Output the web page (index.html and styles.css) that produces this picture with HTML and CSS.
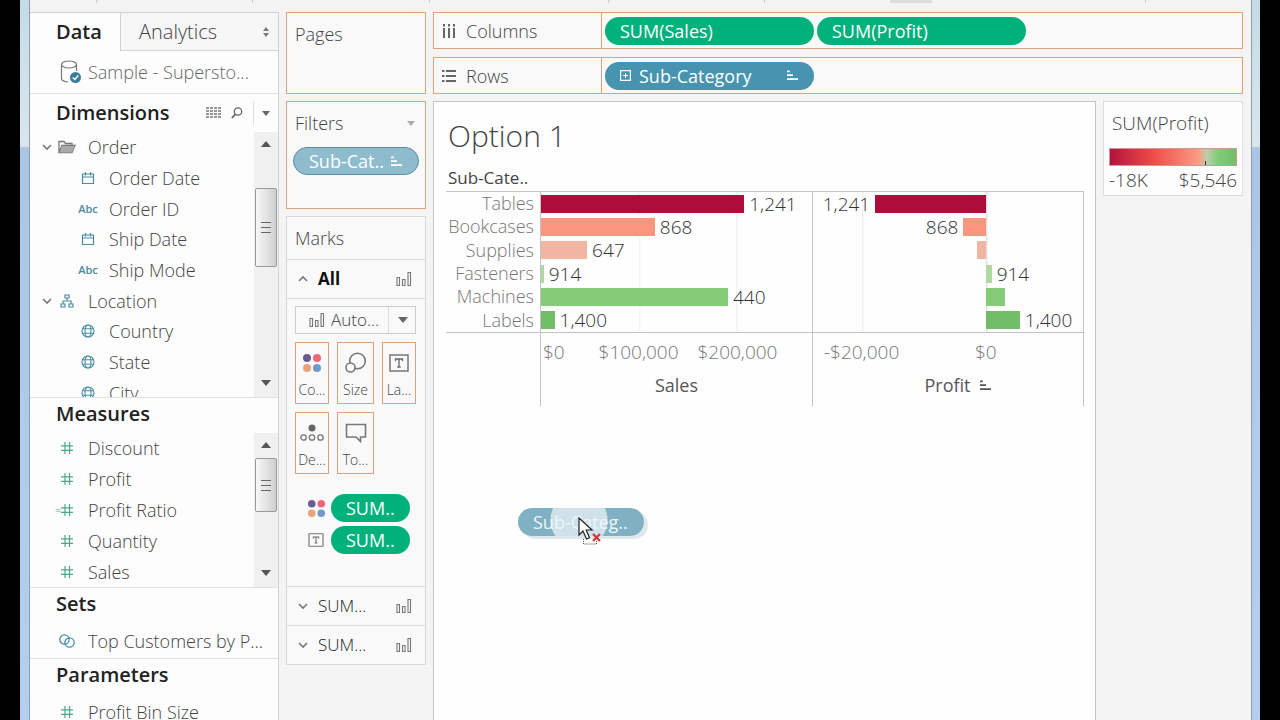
FILE: index.html
```
<!DOCTYPE html>
<html lang="en">
<head>
    <meta charset="utf-8">
    <title>Superstore - Option 1</title>
    <link rel="stylesheet" href="styles.css">
</head>
<body>
    <!-- shared icons -->
    <svg class="sprite" aria-hidden="true">
        <symbol id="i-chevron" viewBox="0 0 12 12"><path d="M2 4l4 4 4-4" fill="none" stroke="#777" stroke-width="1.6"/></symbol>
        <symbol id="i-calendar" viewBox="0 0 14 14"><path d="M1.5 3h11v9.5h-11zM1.5 6h11M4.5 1v3.500M9.500 1v3.500" fill="none" stroke="#4d8a9c" stroke-width="1.2"/></symbol>
        <symbol id="i-globe" viewBox="0 0 14 14"><g fill="none" stroke="#4a8fa6" stroke-width="1.1"><circle cx="7" cy="7" r="6"/><ellipse cx="7" cy="7" rx="3" ry="6"/><path d="M1.500 4.800h11M1.500 9.200h11"/></g></symbol>
        <symbol id="i-hash" viewBox="0 0 14 14"><path d="M5 1v12M9.500 1v12M1 4.800h12M1 9.300h12" stroke="#4fa58a" stroke-width="1.200"/></symbol>
        <symbol id="i-bars" viewBox="0 0 16 16"><path d="M1 6.500h2.500v8H1zM6.500 8.500H9v6H6.500zM12 1.500h2.500v13H12z" fill="none" stroke="#777" stroke-width="1.100"/></symbol>
        <symbol id="i-sort" viewBox="0 0 14 12"><path d="M1 1.500h3M1 5.500h6.500M1 10h12" stroke="currentColor" stroke-width="2"/></symbol>
        <symbol id="i-dots" viewBox="0 0 20 20"><circle cx="5" cy="5" r="4" fill="#6b5b95"/><circle cx="15" cy="5" r="4" fill="#ee6677"/><circle cx="5" cy="15" r="4" fill="#eba27c"/><circle cx="15" cy="15" r="4" fill="#6f9bc8"/></symbol>
        <symbol id="i-text" viewBox="0 0 20 18"><path d="M1 1h18v16H1z" fill="none" stroke="#777" stroke-width="1.500"/><path d="M6.500 7V5h7v2M10 5v8M8.300 13h3.400" fill="none" stroke="#666" stroke-width="1.300"/></symbol>
    </svg>

    <div class="window">
        <div class="toolbar"><i></i><i></i><i></i><i></i><i></i><i class="hot"></i><i></i></div>
        <div class="workspace">

            <aside class="data-pane">
                <div class="tabs">
                    <button class="tab active">Data</button>
                    <button class="tab">Analytics
                        <svg width="6" height="10" viewBox="0 0 6 10"><path d="M0 4l3-4 3 4zM0 6l3 4 3-4z" fill="#777"/></svg>
                    </button>
                </div>
                <div class="source">
                    <svg width="22" height="24" viewBox="0 0 22 24"><g fill="none" stroke="#777" stroke-width="1.200"><ellipse cx="9" cy="4.500" rx="7.500" ry="3.500"/><path d="M1.500 4.500v14c0 1.500 2.500 3 6.500 3.500M16.500 4.500V11"/></g><circle cx="15.500" cy="17.500" r="5.500" fill="#3b7d99"/><path d="M12.800 17.500l2 2 3.500-4" fill="none" stroke="#fff" stroke-width="1.400"/></svg>
                    <span>Sample - Supersto...</span>
                </div>
                <div class="pane-head">
                    <h2>Dimensions</h2>
                    <button class="icon-btn" aria-label="View data"><svg width="15" height="12" viewBox="0 0 15 12"><path d="M0 1h15M0 4h15M0 7h15M0 10h15" stroke="#777" stroke-width="1.300" stroke-dasharray="3 1"/></svg></button>
                    <button class="icon-btn" aria-label="Find field"><svg width="12" height="12" viewBox="0 0 12 12"><circle cx="7" cy="4.500" r="3.700" fill="none" stroke="#666" stroke-width="1.300"/><path d="M4.300 7.300L.8 11" stroke="#666" stroke-width="1.800"/></svg></button>
                    <button class="icon-btn menu" aria-label="Menu"><svg width="8" height="5" viewBox="0 0 8 5"><path d="M0 0h8L4 5z" fill="#666"/></svg></button>
                </div>
                <div class="scroll-area dimensions">
                    <ul class="fields">
                        <li class="folder"><svg class="chev"><use href="#i-chevron"/></svg><svg width="18" height="14" viewBox="0 0 18 14"><path d="M1 12.500v-11h5l1.500 2H14v2M1 12.500l3-7h13l-3 7z" fill="none" stroke="#777" stroke-width="1.300"/><path d="M4 6h12.500L14 12.500H1.500z" fill="#aaa"/></svg><span>Order</span></li>
                        <li class="child"><svg width="14" height="14"><use href="#i-calendar"/></svg><span>Order Date</span></li>
                        <li class="child"><b class="abc">Abc</b><span>Order ID</span></li>
                        <li class="child"><svg width="14" height="14"><use href="#i-calendar"/></svg><span>Ship Date</span></li>
                        <li class="child"><b class="abc">Abc</b><span>Ship Mode</span></li>
                        <li class="folder"><svg class="chev"><use href="#i-chevron"/></svg><svg width="14" height="14" viewBox="0 0 14 14"><path d="M5 1h4v3H5zM7 4v3M3 10V7h8v3M1 10h4v3H1zM9 10h4v3H9z" fill="none" stroke="#4d8a9c" stroke-width="1.200"/></svg><span>Location</span></li>
                        <li class="child"><svg width="14" height="14"><use href="#i-globe"/></svg><span>Country</span></li>
                        <li class="child"><svg width="14" height="14"><use href="#i-globe"/></svg><span>State</span></li>
                        <li class="child"><svg width="14" height="14"><use href="#i-globe"/></svg><span>City</span></li>
                    </ul>
                    <div class="scrollbar"><i class="up"></i><i class="thumb"></i><i class="down"></i></div>
                </div>
                <div class="pane-head short"><h2>Measures</h2></div>
                <div class="scroll-area measures">
                    <ul class="fields">
                        <li><svg width="14" height="14"><use href="#i-hash"/></svg><span>Discount</span></li>
                        <li><svg width="14" height="14"><use href="#i-hash"/></svg><span>Profit</span></li>
                        <li class="calc"><svg width="14" height="14"><use href="#i-hash"/></svg><span>Profit Ratio</span></li>
                        <li><svg width="14" height="14"><use href="#i-hash"/></svg><span>Quantity</span></li>
                        <li><svg width="14" height="14"><use href="#i-hash"/></svg><span>Sales</span></li>
                    </ul>
                    <div class="scrollbar"><i class="up"></i><i class="thumb"></i><i class="down"></i></div>
                </div>
                <div class="pane-head short"><h2>Sets</h2></div>
                <ul class="fields single">
                    <li><svg width="16" height="14" viewBox="0 0 16 14"><g fill="none" stroke="#4a8fa6" stroke-width="1.300"><circle cx="5.500" cy="5.500" r="4.700"/><circle cx="10.500" cy="8.500" r="4.700"/></g></svg><span>Top Customers by P...</span></li>
                </ul>
                <div class="pane-head short"><h2>Parameters</h2></div>
                <ul class="fields single">
                    <li><svg width="14" height="14"><use href="#i-hash"/></svg><span>Profit Bin Size</span></li>
                </ul>
            </aside>

            <div class="cards">
                <section class="card pages"><h3>Pages</h3></section>
                <section class="card filters">
                    <h3>Filters <svg width="8" height="5" viewBox="0 0 8 5"><path d="M0 0h8L4 5z" fill="#aaa"/></svg></h3>
                    <button class="pill faded">Sub-Cat..<svg width="13" height="11"><use href="#i-sort"/></svg></button>
                </section>
                <section class="card marks">
                    <h3>Marks</h3>
                    <button class="mark-row open"><svg class="chev"><use href="#i-chevron"/></svg><span>All</span><svg width="16" height="16"><use href="#i-bars"/></svg></button>
                    <div class="mark-body">
                        <div class="mark-type">
                            <svg width="16" height="16"><use href="#i-bars"/></svg>
                            <select aria-label="Mark type"><option>Auto...</option></select>
                            <svg class="arrow" width="10" height="6" viewBox="0 0 10 6"><path d="M0 0h10L5 6z" fill="#666"/></svg>
                        </div>
                        <div class="mark-buttons">
                            <button><svg width="20" height="20"><use href="#i-dots"/></svg>Co...</button>
                            <button><svg width="22" height="22" viewBox="0 0 22 22"><g fill="#fafafa" stroke="#777" stroke-width="1.600"><circle cx="12.500" cy="9" r="7.800"/><circle cx="5.500" cy="15.500" r="4.500"/></g></svg>Size</button>
                            <button><svg width="20" height="18"><use href="#i-text"/></svg>La...</button>
                            <button><svg width="24" height="18" viewBox="0 0 24 18"><circle cx="12" cy="4" r="3.500" fill="#666"/><g fill="none" stroke="#777" stroke-width="1.300"><circle cx="3.500" cy="13.500" r="2.700"/><circle cx="12" cy="13.500" r="2.700"/><circle cx="20.500" cy="13.500" r="2.700"/></g></svg>De...</button>
                            <button><svg width="22" height="20" viewBox="0 0 22 20"><path d="M1.500 1.500h19v12.500h-5v4.500L11 14H1.500z" fill="none" stroke="#777" stroke-width="1.600"/></svg>To...</button>
                        </div>
                        <div class="encodings">
                            <div><svg width="19" height="19"><use href="#i-dots"/></svg><button class="pill green">SUM..</button></div>
                            <div><svg width="16" height="14"><use href="#i-text"/></svg><button class="pill green">SUM..</button></div>
                        </div>
                    </div>
                    <button class="mark-row"><svg class="chev"><use href="#i-chevron"/></svg><span>SUM...</span><svg width="16" height="16"><use href="#i-bars"/></svg></button>
                    <button class="mark-row"><svg class="chev"><use href="#i-chevron"/></svg><span>SUM...</span><svg width="16" height="16"><use href="#i-bars"/></svg></button>
                </section>
            </div>

            <main class="sheet">
                <div class="shelves">
                    <div class="shelf">
                        <h3><svg width="14" height="14" viewBox="0 0 14 14"><path d="M2 0v2.500M7 0v2.500M12 0v2.500M2 4v10M7 4v10M12 4v10" stroke="#666" stroke-width="2"/></svg>Columns</h3>
                        <button class="pill green">SUM(Sales)</button>
                        <button class="pill green">SUM(Profit)</button>
                    </div>
                    <div class="shelf">
                        <h3><svg width="14" height="14" viewBox="0 0 14 14"><path d="M0 2h2.500M0 7h2.500M0 12h2.500M4 2h10M4 7h10M4 12h10" stroke="#666" stroke-width="2"/></svg>Rows</h3>
                        <button class="pill blue"><svg width="11" height="11" viewBox="0 0 11 11"><path d="M.6.6h9.800v9.800H.6zM5.500 3v5M3 5.500h5" fill="none" stroke="#fff" stroke-width="1.200"/></svg>Sub-Category<svg class="sort" width="13" height="11"><use href="#i-sort"/></svg></button>
                    </div>
                </div>
                <div class="canvas">
                    <section class="view">
                        <h1>Option 1</h1>
                        <div class="field-label">Sub-Cate..</div>
                        <div class="chart">
                            <ul class="names">
                                <li>Tables</li><li>Bookcases</li><li>Supplies</li><li>Fasteners</li><li>Machines</li><li>Labels</li>
                            </ul>
                            <ul class="plot sales">
                                <li><i class="c1" style="width:75%"></i>1,241</li>
                                <li><i class="c2" style="width:42%"></i>868</li>
                                <li><i class="c3" style="width:17%"></i>647</li>
                                <li><i class="c4" style="width:1%"></i>914</li>
                                <li><i class="c5" style="width:69%"></i>440</li>
                                <li><i class="c6" style="width:5%"></i>1,400</li>
                            </ul>
                            <ul class="plot profit">
                                <li class="neg">1,241<i class="c1" style="width:64%"></i></li>
                                <li class="neg">868<i class="c2" style="width:13%"></i></li>
                                <li class="neg"><i class="c3" style="width:5%"></i></li>
                                <li class="pos"><i class="c4" style="width:6%"></i>914</li>
                                <li class="pos"><i class="c5" style="width:20%"></i></li>
                                <li class="pos"><i class="c6" style="width:35%"></i>1,400</li>
                            </ul>
                            <div class="corner"></div>
                            <div class="axis sales-axis">
                                <div class="ticks"><span>$0</span><span>$100,000</span><span>$200,000</span></div>
                                <div class="axis-title">Sales</div>
                            </div>
                            <div class="axis profit-axis">
                                <div class="ticks"><span>-$20,000</span><span>$0</span></div>
                                <div class="axis-title">Profit <svg width="13" height="11"><use href="#i-sort"/></svg></div>
                            </div>
                        </div>
                        <div class="drag">
                            Sub-Categ..
                            <svg class="cursor" width="26" height="30" viewBox="0 0 26 30"><path d="M1 1v17l4-4 3.500 8 3-1.300L8.200 13H14z" fill="#fff" stroke="#222" stroke-width="1.200"/><path d="M5.500 22v5h13v-3" fill="none" stroke="#444" stroke-dasharray="1 1"/><path d="M15 17l7 7M22 17l-7 7" stroke="#d0353a" stroke-width="2.200"/></svg>
                        </div>
                    </section>
                    <aside class="legend">
                        <h3>SUM(Profit)</h3>
                        <div class="ramp"></div>
                        <div class="range"><span>-18K</span><span>$5,546</span></div>
                    </aside>
                </div>
            </main>
        </div>
    </div>
</body>
</html>
```
FILE: styles.css
```
* {
    box-sizing: border-box;
}

body {
    margin: 0;
    background: #000;
    color: #444;
    font: 300 18px/24px "Open Sans", sans-serif;
    height: 100vh;
    overflow: hidden;
}

h1, h2, h3, ul {
    margin: 0;
    padding: 0;
    font-weight: 300;
    list-style: none;
}

h3 {
    font-size: 18px;
}

button, select {
    font: inherit;
    color: inherit;
    border: 0;
    margin: 0;
    padding: 0;
    background: none;
    text-align: left;
    white-space: nowrap;
}

svg {
    flex: none;
    display: block;
}

.sprite {
    position: absolute;
    width: 0;
    height: 0;
}

/* window frame */
.window {
    height: 100vh;
    margin: 0 20px;
    padding: 0 8px 0 9px;
    background: linear-gradient(#c3dce8 0, #d9e6ee 146px, #a9c6e8 148px, #b4cff0 100%);
    display: flex;
    flex-direction: column;
}

.toolbar {
    height: 12px;
    flex: none;
    background: #f3f3f4;
    border: solid #8fa0a0;
    border-width: 0 1px;
    display: grid;
    grid-template-columns: 156fr 177fr 179fr 156fr 126fr 255fr 106fr;
    padding-left: 66px;
}

.toolbar i {
    width: 1px;
    height: 3px;
    background: #ccc;
}

.toolbar .hot {
    width: 42px;
    background: #dedee0;
}

.workspace {
    flex: 1;
    min-height: 0;
    display: flex;
    gap: 7px;
    padding-right: 8px;
    background: #f4f4f5;
    border: solid #8fa0a0;
    border-width: 0 1px;
}

/* data pane */
.data-pane {
    width: 249px;
    flex: none;
    background: #fdfdfd;
    border: solid #d2d2d4;
    border-width: 1px 1px 0 0;
    overflow: hidden;
}

.tabs {
    display: flex;
    height: 38px;
}

.tab {
    flex: 1;
    display: flex;
    align-items: center;
    justify-content: space-between;
    padding: 0 9px 0 18px;
    font-size: 20px;
    background: #f7f6f7;
    border: solid #d2d2d4;
    border-width: 0 0 1px 1px;
}

.tab.active {
    flex: none;
    width: 90px;
    padding: 0 0 0 26px;
    color: #222;
    font-weight: 600;
    background: none;
    border: 0;
}

.source {
    display: flex;
    align-items: center;
    gap: 6px;
    height: 43px;
    padding-left: 30px;
    color: #666;
    border-bottom: 1px solid #e2e2e4;
}

.pane-head {
    display: flex;
    align-items: center;
    gap: 10px;
    height: 38px;
    padding-left: 26px;
}

.pane-head h2 {
    flex: 1;
    font-size: 20px;
    font-weight: 600;
    color: #222;
}

.pane-head.short {
    height: 36px;
    padding-bottom: 4px;
    border-top: 1px solid #e2e2e4;
}

.pane-head .menu {
    width: 25px;
    height: 24px;
    display: grid;
    place-items: center;
    border-left: 1px solid #ddd;
}

.scroll-area {
    display: flex;
    overflow: hidden;
}

.dimensions {
    height: 265px;
}

.measures {
    height: 154px;
}

.fields {
    flex: 1;
    display: flex;
    flex-direction: column;
}

.dimensions .fields {
    height: 276px;
}

.fields li {
    flex: 1;
    display: grid;
    grid-template-columns: 20px 1fr;
    gap: 11px;
    align-items: center;
    justify-items: start;
    padding-left: 27px;
    white-space: nowrap;
}

.fields li > svg:nth-last-child(2), .abc {
    justify-self: center;
}

.fields .folder {
    grid-template-columns: 12px 20px 1fr;
    gap: 4px;
    padding-left: 11px;
}

.folder span {
    padding-left: 7px;
}

.fields .child {
    padding-left: 48px;
}

.chev {
    width: 12px;
    height: 12px;
}

.abc {
    font-size: 11px;
    font-weight: 600;
    color: #4d8a9c;
}

.calc {
    position: relative;
}

.calc::before {
    content: "=";
    position: absolute;
    left: 25px;
    color: #4fa58a;
    font-size: 11px;
}

.single li {
    flex: none;
    height: 35px;
}

.scrollbar {
    width: 24px;
    display: flex;
    flex-direction: column;
    align-items: center;
    background: #f0f0f1;
}

.scrollbar .up, .scrollbar .down {
    border: solid transparent;
    border-width: 0 5px 6px;
    border-bottom-color: #555;
    margin: 9px 0 10px;
}

.scrollbar .down {
    border-width: 6px 5px 0;
    border-top-color: #555;
    margin: auto 0 11px;
}

.scrollbar .thumb {
    width: 22px;
    height: 54px;
    border: 1px solid #999;
    border-radius: 2px;
    background:
        repeating-linear-gradient(#666 0 1px, transparent 1px 5px) center / 10px 11px no-repeat,
        linear-gradient(90deg, #f8f8f8, #cfcfd1);
}

.dimensions .thumb {
    height: 79px;
    margin-top: 31px;
}

/* shelves and cards */
.cards {
    width: 140px;
    flex: none;
}

.card {
    border: 1px solid #dba27c;
    background: #f9f9fa;
    margin-bottom: 7px;
}

.card h3 {
    display: flex;
    align-items: center;
    justify-content: space-between;
    height: 42px;
    padding: 0 10px 0 8px;
}

.pages {
    height: 82px;
}

.filters {
    height: 108px;
    padding: 0 6px;
}

.filters h3 {
    padding: 0 4px 0 2px;
}

.pill {
    display: flex;
    align-items: center;
    height: 28px;
    padding: 0 15px;
    border-radius: 14px;
    color: #fff;
    font-weight: 500;
}

.green {
    background: #00b17c;
}

.blue {
    background: #4694b0;
    gap: 8px;
}

.blue .sort {
    margin-left: auto;
}

.faded {
    width: 100%;
    background: #8ebccd;
    border: 1px solid #5b8fa3;
    justify-content: space-between;
    margin-top: 3px;
}

.marks {
    border-color: #d8d8da;
}

.mark-row {
    display: flex;
    align-items: center;
    gap: 9px;
    width: 100%;
    height: 39px;
    padding: 0 13px 0 10px;
    border-top: 1px solid #dcdcde;
    color: #222;
    font-size: 17px;
}

.mark-row span {
    flex: 1;
}

.open span {
    font-weight: 700;
    color: #111;
}

.open .chev {
    transform: rotate(180deg);
}

.mark-body {
    height: 288px;
    border-top: 1px solid #dcdcde;
    padding: 7px 9px 0 8px;
}

.mark-type {
    display: flex;
    align-items: center;
    height: 28px;
    padding-left: 13px;
    gap: 6px;
    border: 1px solid #ccc;
    position: relative;
    font-size: 17px;
}

.mark-type select {
    appearance: none;
    flex: 1;
    height: 26px;
    min-width: 0;
}

.mark-type .arrow {
    position: absolute;
    right: 7px;
    top: 10px;
    pointer-events: none;
}

.mark-type::after {
    content: "";
    position: absolute;
    right: 26px;
    top: 0;
    height: 26px;
    border-left: 1px solid #ddd;
}

.mark-buttons {
    display: grid;
    grid-template-columns: 34px 37px 34px;
    justify-content: space-between;
    gap: 8px 0;
    margin-top: 8px;
}

.mark-buttons button {
    display: grid;
    grid-template-rows: 39px 16px;
    place-items: center;
    height: 62px;
    border: 1px solid #dba27c;
    font-size: 14px;
    line-height: 16px;
}

.encodings {
    display: grid;
    gap: 4px;
    padding: 20px 6px 0 12px;
}

.encodings div {
    display: grid;
    grid-template-columns: 18px 79px;
    gap: 6px;
    align-items: center;
    justify-items: center;
}

.encodings .pill {
    width: 79px;
}

.sheet {
    flex: 1;
    min-width: 0;
    display: flex;
    flex-direction: column;
    gap: 7px;
}

.shelves {
    display: grid;
    gap: 8px;
}

.shelf {
    display: flex;
    align-items: center;
    gap: 3px;
    height: 37px;
    border: 1px solid #dba27c;
    background: #f9f9fa;
}

.shelf h3 {
    display: flex;
    align-items: center;
    gap: 10px;
    width: 168px;
    height: 100%;
    padding-left: 8px;
    border-right: 1px solid #dba27c;
}

.shelf .pill {
    width: 209px;
}

.canvas {
    flex: 1;
    display: flex;
    align-items: flex-start;
    gap: 7px;
}

.view {
    flex: 1;
    align-self: stretch;
    position: relative;
    background: #fefefe;
    border: 1px solid #c4c4c7;
    border-bottom: 0;
    padding: 14px 11px 0 12px;
}

.view h1 {
    font-size: 30px;
    line-height: 40px;
    padding-left: 2px;
}

.field-label {
    height: 35px;
    padding: 10px 2px 0;
    font-size: 17px;
    font-weight: 400;
}

/* chart */
.chart {
    display: grid;
    grid-template-columns: 94px 1fr 1fr;
    grid-template-rows: 141px 73px;
    border: solid #c4c4c7;
    border-width: 1px 0 0;
    color: #777;
}

.names, .plot {
    display: grid;
    grid-auto-rows: 1fr;
    border-bottom: 1px solid #c4c4c7;
    line-height: 22px;
}

.names li {
    text-align: right;
    padding-right: 6px;
}

.plot {
    border-left: 1px solid #c4c4c7;
    color: #333;
    font-size: 19px;
}

.plot li {
    display: flex;
    align-items: center;
    gap: 5px;
}

.plot i {
    flex: none;
    height: 18px;
}

.sales {
    background: linear-gradient(90deg, transparent 36%, #f1f1f3 36%, transparent 37%, transparent 72%, #f1f1f3 72%, transparent 73%);
}

.profit, .profit-axis {
    border-right: 1px solid #c4c4c7;
}

.profit {
    background: linear-gradient(90deg, transparent 18%, #e9e9eb 18%, transparent 19%, transparent 64%, #d8d8da 64%, transparent 65%);
}

.neg {
    width: 64%;
    justify-content: flex-end;
}

.pos {
    margin-left: 64%;
}

.c1 { background: #ad0e39; }
.c2 { background: #fb967e; }
.c3 { background: #f2b5a2; }
.c4 { background: #aed9a4; }
.c5 { background: #86cc78; }
.c6 { background: #72bd68; }

.axis {
    border-left: 1px solid #c4c4c7;
    padding-top: 7px;
}

.ticks {
    display: grid;
    text-align: center;
    font-size: 19px;
}

.sales-axis .ticks {
    grid-template-columns: 18% 36% 37%;
}

.sales-axis span:first-child {
    text-align: left;
    padding-left: 2px;
}

.profit-axis .ticks {
    grid-template-columns: 36% 56%;
}

.axis-title {
    display: flex;
    justify-content: center;
    align-items: center;
    gap: 8px;
    margin-top: 9px;
    font-weight: 400;
    color: #555;
}

.profit-axis .axis-title {
    padding-left: 20px;
}

/* pill being dragged off the shelf */
.drag {
    position: absolute;
    left: 84px;
    top: 406px;
    width: 126px;
    height: 28px;
    padding: 2px 15px;
    border-radius: 14px;
    background: radial-gradient(circle at 61px 12px, #cfe2ea 28px, #80b1c2 29px);
    box-shadow: 4px 3px 1px #dfe7ec;
    color: #eef6fa;
    font-weight: 500;
}

.cursor {
    position: absolute;
    left: 60px;
    top: 9px;
}

/* color legend */
.legend {
    width: 140px;
    height: 95px;
    padding: 9px 5px 0;
    background: #fdfdfd;
    border: 1px solid #dcdcde;
}

.legend h3 {
    padding-left: 3px;
    font-size: 19px;
}

.ramp {
    height: 18px;
    margin: 13px 0 2px;
    border: 1px solid #c99;
    background:
        linear-gradient(#333, #333) 76% 100% / 1px 4px no-repeat,
        linear-gradient(90deg, #b3123d, #ee4f49 35%, #fb9a84 70%, #b9cfa8 77%, #82ca78 86%, #72c068);
}

.range {
    display: flex;
    justify-content: space-between;
    font-size: 19px;
}
```
